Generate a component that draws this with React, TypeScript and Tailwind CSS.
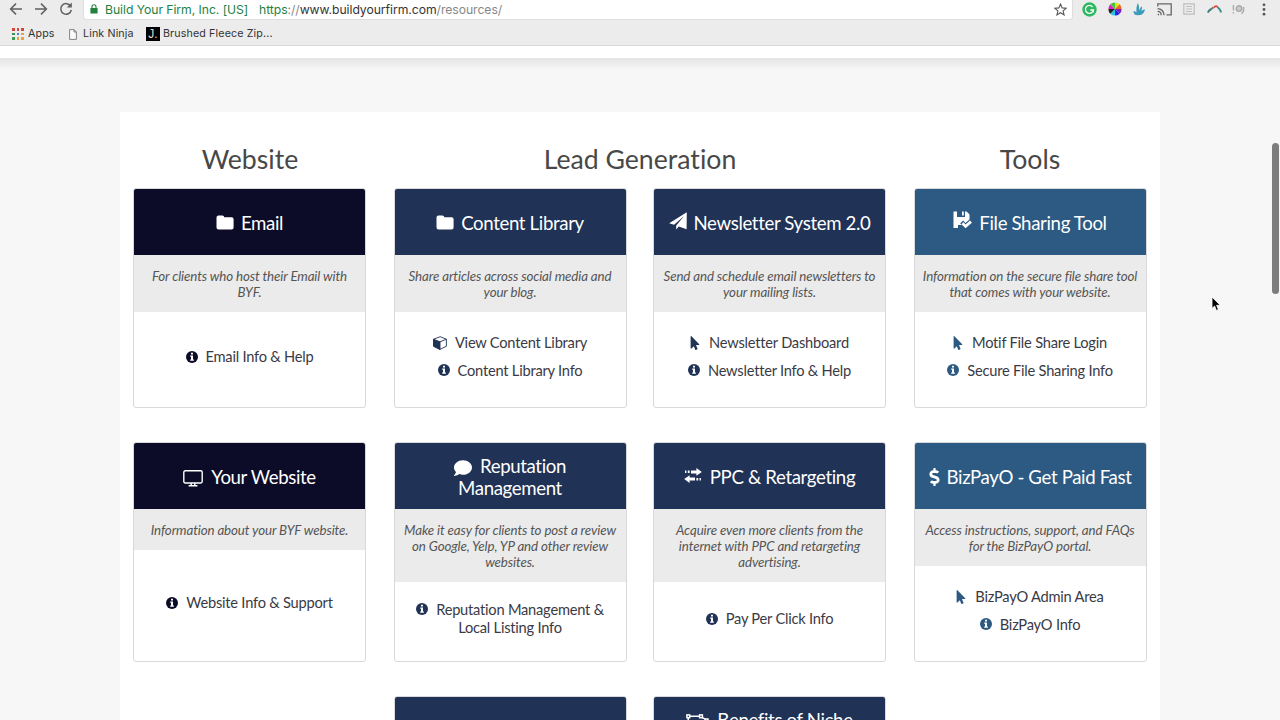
import React from 'react';
import { FaComment, FaDollarSign, FaMousePointer } from 'react-icons/fa';

type IconProps = { className?: string };

const FolderIcon: React.FC<IconProps> = ({ className }) => (
  <svg className={className} viewBox="0 0 18 15" fill="currentColor">
    <path d="M0.5 2.4Q0.5 0.4 2.5 0.4H6.3Q8.1 0.4 8.3 2.2H15.6Q17.6 2.2 17.6 4.2V12.6Q17.6 14.6 15.6 14.6H2.5Q0.5 14.6 0.5 12.6Z" />
  </svg>
);

const PlaneIcon: React.FC<IconProps> = ({ className }) => (
  <svg className={className} viewBox="0 0 18 18" fill="currentColor">
    <path d="M17.8 0.2L0.2 11.2L5 12.8L15.2 4L7.2 13.6V17.6L9.8 14.4L17.6 17.2Z" />
  </svg>
);

const SaveCheckIcon: React.FC<IconProps> = ({ className }) => (
  <svg className={className} viewBox="0 0 19 18" fill="currentColor">
    <path d="M0.5 0.5H4V6H12V0.5H13.6L16.5 3.4V8.6L12.4 12L10.2 9.6L7.2 12.2L8.7 14H5V17H0.5Z" />
    <path d="M9 0.5H10.8V4.4H9Z" />
    <path d="M9.4 12.2L12.6 15.4L18 10.6" fill="none" stroke="currentColor" strokeWidth="2.8" />
  </svg>
);

const MonitorIcon: React.FC<IconProps> = ({ className }) => (
  <svg className={className} viewBox="0 0 20 17" fill="none" stroke="currentColor" strokeWidth="1.4">
    <rect x="0.8" y="0.8" width="18.4" height="12.2" rx="1.4" />
    <path d="M8.2 13V15.4M11.8 13V15.4M5.6 15.8H14.4" />
  </svg>
);

const ExchangeIcon: React.FC<IconProps> = ({ className }) => (
  <svg className={className} viewBox="0 0 18 15" fill="currentColor">
    <path d="M7 2.4H12.4V0L17.8 3.9L12.4 7.8V5.4H7ZM1 2.4H2.4V5H1ZM3.8 2.4H5.6V5H3.8Z" />
    <path d="M11 9.6H5.6V7.2L0.2 11.1L5.6 15V12.6H11ZM12.4 9.9H14.2V12.4H12.4ZM15.5 9.9H16.9V12.4H15.5Z" />
  </svg>
);

const VectorIcon: React.FC<IconProps> = ({ className }) => (
  <svg className={className} viewBox="0 0 23 18" fill="none" stroke="currentColor" strokeWidth="1.5">
    <path d="M3.5 2.2H13.5M2.2 3.6V14M16.2 3.6L19.4 5.2M3.6 15.4H18M20.6 8V14" />
    <rect x="0.9" y="0.9" width="2.8" height="2.8" />
    <rect x="13.6" y="0.9" width="2.8" height="2.8" />
    <rect x="19.2" y="5" width="2.8" height="2.8" />
    <rect x="0.9" y="14" width="2.8" height="2.8" />
    <rect x="19.2" y="14" width="2.8" height="2.8" />
  </svg>
);

const CubeIcon: React.FC<IconProps> = ({ className }) => (
  <svg className={className} viewBox="0 0 14 14" fill="none" stroke="currentColor" strokeWidth="0.9" strokeLinejoin="round">
    <path d="M0.6 3.2L7.2 0.7L13.4 3.2V10.2L7 13.4L0.6 10.2ZM7 5.8L13.4 3.2" />
    <path d="M0.6 3.2L7 5.8V13.4L0.6 10.2Z" fill="currentColor" />
  </svg>
);

const InfoIcon: React.FC<IconProps> = ({ className }) => (
  <svg className={className} viewBox="0 0 12 12">
    <circle cx="6" cy="6" r="6" fill="currentColor" />
    <path d="M5 1.8H7V3.4H5ZM4.2 4.4H7V8.4H7.9V9.8H4.2V8.4H5V5.7H4.2Z" fill="#fff" />
  </svg>
);

type Link = { kind: 'info' | 'pointer' | 'cube'; label: React.ReactNode };

type CardData = {
  tone: 'dark' | 'navy' | 'blue';
  icon?: React.ReactNode;
  title?: React.ReactNode;
  text?: string;
  links?: Link[];
};

const headerTone = {
  dark: 'bg-[#0d0c28]',
  navy: 'bg-[#203255]',
  blue: 'bg-[#2d5a83]',
};

const iconTone = {
  dark: 'text-[#0d0c28]',
  navy: 'text-[#203255]',
  blue: 'text-[#2d5a83]',
};

const rows: (CardData | null)[][] = [
  [
    {
      tone: 'dark',
      icon: <FolderIcon className="inline-block w-[18px] h-[15px] mr-[7px] -mt-1.5" />,
      title: 'Email',
      text: 'For clients who host their Email with BYF.',
      links: [{ kind: 'info', label: 'Email Info & Help' }],
    },
    {
      tone: 'navy',
      icon: <FolderIcon className="inline-block w-[18px] h-[15px] mr-[7px] -mt-1.5" />,
      title: 'Content Library',
      text: 'Share articles across social media and your blog.',
      links: [
        { kind: 'cube', label: 'View Content Library' },
        { kind: 'info', label: 'Content Library Info' },
      ],
    },
    {
      tone: 'navy',
      icon: <PlaneIcon className="inline-block w-[18px] h-[18px] mr-[7px] -mt-2" />,
      title: 'Newsletter System 2.0',
      text: 'Send and schedule email newsletters to your mailing lists.',
      links: [
        { kind: 'pointer', label: 'Newsletter Dashboard' },
        { kind: 'info', label: 'Newsletter Info & Help' },
      ],
    },
    {
      tone: 'blue',
      icon: <SaveCheckIcon className="inline-block w-[19px] h-[18px] mr-[7px] -mt-2.5" />,
      title: 'File Sharing Tool',
      text: 'Information on the secure file share tool that comes with your website.',
      links: [
        { kind: 'pointer', label: 'Motif File Share Login' },
        { kind: 'info', label: 'Secure File Sharing Info' },
      ],
    },
  ],
  [
    {
      tone: 'dark',
      icon: <MonitorIcon className="inline-block w-[20px] h-[17px] mr-[8px] -mt-0.5" />,
      title: 'Your Website',
      text: 'Information about your BYF website.',
      links: [{ kind: 'info', label: 'Website Info & Support' }],
    },
    {
      tone: 'navy',
      icon: <FaComment className="inline-block w-[18px] h-[18px] mr-[8px] -mt-0.5" />,
      title: <>Reputation<br />Management</>,
      text: 'Make it easy for clients to post a review on Google, Yelp, YP and other review websites.',
      links: [{ kind: 'info', label: <>Reputation Management &<br />Local Listing Info</> }],
    },
    {
      tone: 'navy',
      icon: <ExchangeIcon className="inline-block w-[18px] h-[15px] mr-[8px] -mt-2" />,
      title: 'PPC & Retargeting',
      text: 'Acquire even more clients from the internet with PPC and retargeting advertising.',
      links: [{ kind: 'info', label: 'Pay Per Click Info' }],
    },
    {
      tone: 'blue',
      icon: <FaDollarSign className="inline-block w-[11px] h-[18px] mr-[7px] -mt-1" />,
      title: 'BizPayO - Get Paid Fast',
      text: 'Access instructions, support, and FAQs for the BizPayO portal.',
      links: [
        { kind: 'pointer', label: 'BizPayO Admin Area' },
        { kind: 'info', label: 'BizPayO Info' },
      ],
    },
  ],
  [
    null,
    { tone: 'navy' },
    {
      tone: 'navy',
      icon: <VectorIcon className="inline-block w-[23px] h-[18px] mr-[8px]" />,
      title: <>Benefits of Niche<br />&nbsp;</>,
    },
    null,
  ],
];

const LinkIcon: React.FC<{ kind: Link['kind']; className: string }> = ({ kind, className }) => {
  if (kind === 'cube') return <CubeIcon className={`inline-block w-[14px] h-[14px] mr-[8px] -mt-0.5 ${className}`} />;
  if (kind === 'pointer') return <FaMousePointer className={`inline-block w-[10px] h-[14px] mr-[9px] -mt-0.5 ${className}`} />;
  return <InfoIcon className={`inline-block w-[12px] h-[12px] mr-[8px] -mt-[3px] ${className}`} />;
};

const Card: React.FC<{ card: CardData }> = ({ card }) => (
  <div className="h-[219.8px] w-[233px] flex flex-col rounded-[3px] overflow-hidden border border-[#d9d9dc] text-center">
    <div className={`h-[66px] shrink-0 flex items-center justify-center pt-[2.4px] text-white text-[18.67px] leading-[21.3px] tracking-[-0.37px] ${headerTone[card.tone]}`}>
      <h3 className="whitespace-nowrap">{card.icon}{card.title}</h3>
    </div>
    {card.text && (
      <p className="shrink-0 bg-[#ebebeb] px-[7px] py-[12.3px] text-[13.33px] leading-[16px] tracking-[-0.12px] italic text-[#555]">{card.text}</p>
    )}
    <div className="grow flex flex-col justify-center pt-[4.2px]">
      {card.links?.map((link, i) => (
        <a key={i} className="block mb-[9px] text-[14.67px] leading-[18.6px] tracking-[-0.23px] text-[#3a3a45]">
          <LinkIcon kind={link.kind} className={iconTone[card.tone]} />
          {link.label}
        </a>
      ))}
    </div>
  </div>
);

const appDots = [
  'bg-[#d8453b]', 'bg-[#d8453b]', 'bg-[#d8453b]',
  'bg-[#3d9a50]', 'bg-[#4a7fe0]', 'bg-[#e8a33c]',
  'bg-[#3d9a50]', 'bg-[#e8a33c]', 'bg-[#e8a33c]',
];

const BrowserBar: React.FC = () => (
  <header className="h-[46px] shrink-0 bg-[#ececec] border-b border-[#d8d8d8] font-['Inter',sans-serif] text-[#333]">
    <div className="flex h-[20px]">
      <div className="w-[83px] shrink-0 flex gap-[11px] pl-[9px] pt-[2px] text-[#606060]">
        <svg className="w-[14px] h-[14px]" viewBox="0 0 14 14" fill="none" stroke="currentColor" strokeWidth="1.5">
          <path d="M13 7H1.8M7 1.6L1.6 7L7 12.4" />
        </svg>
        <svg className="w-[14px] h-[14px]" viewBox="0 0 14 14" fill="none" stroke="currentColor" strokeWidth="1.5">
          <path d="M1 7H12.2M7 1.6L12.4 7L7 12.4" />
        </svg>
        <svg className="w-[14px] h-[14px]" viewBox="0 0 14 14" fill="none" stroke="currentColor" strokeWidth="1.5">
          <path d="M11.6 4.1A5.3 5.3 0 1 0 12.3 8" />
          <path d="M12.8 0.6V5.6H7.8Z" fill="currentColor" stroke="none" />
        </svg>
      </div>
      <div className="w-[990px] shrink-0 flex bg-white border border-t-0 border-[#dedede] rounded-b-[3px] text-[12.2px] leading-[19px] tracking-[-0.05px] whitespace-nowrap">
        <svg className="w-[8px] h-[10px] ml-[6px] mt-[4px]" viewBox="0 0 8 10" fill="#23813f">
          <rect x="0.4" y="4" width="7.2" height="5.6" rx="0.6" />
          <path d="M2 4.4V2.8A2 2 0 0 1 6 2.8V4.4" fill="none" stroke="#23813f" strokeWidth="1.1" />
        </svg>
        <span className="w-[154px] ml-[7px] text-[#23813f]">Build Your Firm, Inc. [US]</span>
        <span>
          <span className="text-[#23813f]">https</span><span className="text-[#888]">://</span>www.buildyourfirm.com<span className="text-[#888]">/resources/</span>
        </span>
        <svg className="w-[13px] h-[13px] ml-auto mr-[5px] mt-[3px]" viewBox="0 0 24 24" fill="none" stroke="#555" strokeWidth="2">
          <path d="M12 2L15 9L22.5 9.6L16.8 14.5L18.6 22L12 18L5.4 22L7.2 14.5L1.5 9.6L9 9Z" />
        </svg>
      </div>
      <div className="grow flex items-center gap-[10.5px] pl-[9px] pb-[2px]">
        <svg className="w-[15px] h-[15px]" viewBox="0 0 15 15" fill="none">
          <circle cx="7.5" cy="7.5" r="7.2" fill="#2fb862" />
          <path d="M10.6 4.9A4 4 0 1 0 11.4 8H8.4M11.3 7.6V10.6" stroke="#fff" strokeWidth="1.3" />
        </svg>
        <svg className="w-[14px] h-[14px]" viewBox="0 0 14 14">
          <path d="M7 7V0.4A6.6 6.6 0 0 1 11.7 2.3Z" fill="#e8e020" />
          <path d="M7 7L11.7 2.3A6.6 6.6 0 0 1 13.6 7Z" fill="#e86a20" />
          <path d="M7 7H13.6A6.6 6.6 0 0 1 11.7 11.7Z" fill="#7a20c0" />
          <path d="M7 7L11.7 11.7A6.6 6.6 0 0 1 7 13.6Z" fill="#2a20e0" />
          <path d="M7 7V13.6A6.6 6.6 0 0 1 2.3 11.7Z" fill="#20c8e8" />
          <path d="M7 7L2.3 11.7A6.6 6.6 0 0 1 0.4 7Z" fill="#222" />
          <path d="M7 7H0.4A6.6 6.6 0 0 1 2.3 2.3Z" fill="#e020c8" />
          <path d="M7 7L2.3 2.3A6.6 6.6 0 0 1 7 0.4Z" fill="#40c830" />
        </svg>
        <svg className="w-[14px] h-[14px]" viewBox="0 0 14 14" fill="#3a9cba">
          <path d="M2.6 12.6C1.6 11 2 10 1.2 9.2C3 9.2 3.8 9.6 4.6 10.4C4 7 4.6 4 5.8 1C7 3.4 7.4 6 7.2 9C7.8 6.8 8.6 5.2 10 4.2C10.2 6 9.8 7.6 9.4 9.2C10.4 8 11.6 7.4 13 7.4C12.4 9.8 11 12.6 8 13Q4.6 13.4 2.6 12.6Z" />
        </svg>
        <svg className="w-[15px] h-[13px]" viewBox="0 0 15 13" fill="none" stroke="#666" strokeWidth="1.3">
          <path d="M0.8 3.4V0.8H14.2V11.8H9.4M0.6 5.6A6.4 6.4 0 0 1 7 12.2M0.6 8.4A3.8 3.8 0 0 1 4.2 12.2" />
          <circle cx="1.4" cy="11.6" r="0.8" fill="#666" stroke="none" />
        </svg>
        <svg className="w-[12px] h-[12px] ml-[1px]" viewBox="0 0 12 12" fill="none" stroke="#bdbdbd" strokeWidth="1.2">
          <path d="M0.8 0.8H11.2V11.2H0.8ZM3 3.5H9M3 6H9M3 8.5H9" />
        </svg>
        <svg className="w-[15px] h-[10px] ml-[1px]" viewBox="0 0 15 10" fill="none" strokeWidth="1.9">
          <path d="M0.8 8.6Q2 6 4.4 5" stroke="#3d7f80" />
          <path d="M4 5.2L6.6 3.2" stroke="#777" />
          <path d="M7 3.6Q9 0.6 11 3.8" stroke="#e04a35" />
          <path d="M11 3.6Q13.2 5.4 14.2 8.4" stroke="#3f8f8b" />
        </svg>
        <svg className="w-[13px] h-[11px]" viewBox="0 0 13 11" fill="none" stroke="#aaa" strokeWidth="1.4">
          <path d="M1.4 1V6.6M1.4 8V9.6M11.6 3V7L9.6 9.8" />
          <circle cx="7" cy="4.6" r="2.8" fill="#ccc" />
        </svg>
        <svg className="w-[4px] h-[13px] ml-[6px]" viewBox="0 0 4 13" fill="#555">
          <circle cx="2" cy="1.8" r="1.4" />
          <circle cx="2" cy="6.5" r="1.4" />
          <circle cx="2" cy="11.2" r="1.4" />
        </svg>
      </div>
    </div>
    <div className="flex h-[25px] items-center pt-[3px] pl-[12px] text-[10.7px] tracking-[0.13px] whitespace-nowrap">
      <div className="grid grid-cols-3 gap-[2px] w-[12px] mr-[4px]">
        {appDots.map((color, i) => (
          <span key={i} className={`size-[2.7px] ${color}`} />
        ))}
      </div>
      <span className="w-[41px]">Apps</span>
      <svg className="w-[8px] h-[11px] mr-[6px]" viewBox="0 0 8 11" fill="#fafafa" stroke="#777" strokeWidth="0.9">
        <path d="M0.6 0.6H5L7.4 3V10.4H0.6ZM5 0.6V3H7.4" />
      </svg>
      <span className="w-[63px]">Link Ninja</span>
      <span className="w-[14px] h-[14px] mr-[3px] bg-black text-[#ddd] text-[12px] leading-[14px] text-center font-['Liberation_Sans',sans-serif]">J.</span>
      <span>Brushed Fleece Zip...</span>
    </div>
  </header>
);

const App: React.FC = () => {
  return (
    <div className="relative h-[720px] w-[1280px] flex flex-col overflow-hidden bg-[#f7f7f7] font-['Lato',sans-serif] [font-variant-ligatures:none]">
      <BrowserBar />
      <div className="h-[12px] shrink-0 bg-white" />
      <div className="h-[12px] shrink-0 bg-linear-to-b from-[#e4e4e4] to-[#f7f7f7]" />

      <main className="w-[1040px] h-[700px] shrink-0 mx-auto mt-[42px] pt-[29px] bg-white">
        <div className="grid grid-cols-4 h-[47.4px] text-center text-[26.67px] leading-[36px] text-[#484848]">
          <h2>Website</h2>
          <h2 className="col-span-2">Lead Generation</h2>
          <h2>Tools</h2>
        </div>
        <div className="grid grid-cols-4 gap-y-[34.2px]">
          {rows.flat().map((card, i) => (
            <div key={i} className={i % 2 === 0 ? 'pl-[13px]' : 'pl-[13.5px]'}>
              {card && <Card card={card} />}
            </div>
          ))}
        </div>
      </main>

      {/* scrollbar thumb and mouse pointer */}
      <div className="absolute left-[1272px] top-[143px] w-[7px] h-[151px] rounded-full bg-[#7d7d7d]" />
      <svg className="absolute left-[1211px] top-[296px] w-[10px] h-[16px]" viewBox="0 0 10 16" fill="#000" stroke="#fff" strokeWidth="0.8">
        <path d="M1 1V12.4L3.6 10L5.4 14.4L7.4 13.5L5.6 9.3H9.2Z" />
      </svg>
    </div>
  );
};

export default App;
